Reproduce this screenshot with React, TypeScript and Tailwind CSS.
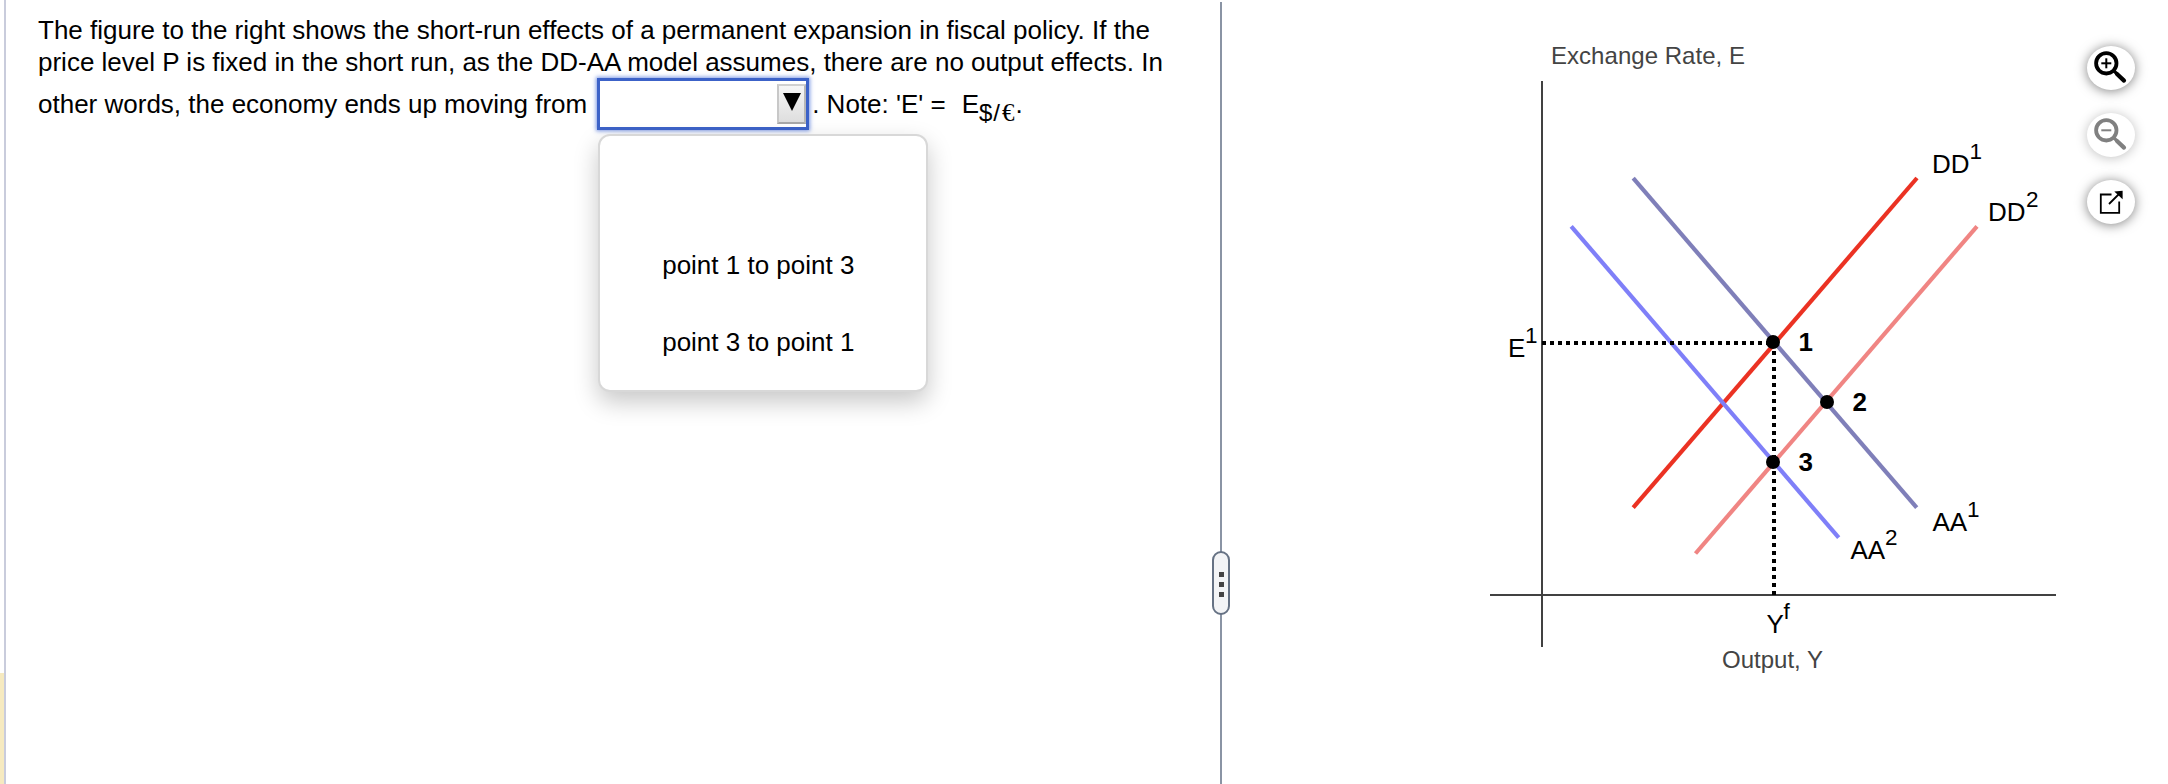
import React from 'react';

const options = ['', 'point 1 to point 3', 'point 3 to point 1'];

interface CurveProps {
  from: [number, number];
  to: [number, number];
  color: string;
}

const Curve = ({ from, to, color }: CurveProps) => (
  <line x1={from[0]} y1={from[1]} x2={to[0]} y2={to[1]} stroke={color} strokeWidth={4.2} />
);

interface LabelProps {
  x: number;
  y: number;
  text: string;
  sup: string;
  supX: number;
}

const Label = ({ x, y, text, sup, supX }: LabelProps) => (
  <>
    <text x={x} y={y} fontSize={26}>{text}</text>
    <text x={supX} y={y - 14} fontSize={22.5}>{sup}</text>
  </>
);

const Point = ({ x, y, label }: { x: number; y: number; label: string }) => (
  <>
    <circle cx={x} cy={y} r={7} />
    <text x={x + 25.5} y={y + 9} fontSize={26} fontWeight="bold">{label}</text>
  </>
);

const Chart = () => (
  <svg className="h-[784px] w-[620px] shrink-0" viewBox="1460 0 620 784">
    <g fill="#444444" fontSize={24}>
      <text x={1551} y={64} textLength={194}>Exchange Rate, E</text>
      <text x={1722} y={668} textLength={101}>Output, Y</text>
    </g>
    <g stroke="#414141" strokeWidth={2}>
      <line x1={1542} y1={81} x2={1542} y2={647} />
      <line x1={1490} y1={595} x2={2056} y2={595} />
    </g>

    <Curve from={[1633.2, 507.7]} to={[1917, 178]} color="#eb3223" />
    <Curve from={[1695.5, 553.5]} to={[1977, 226.3]} color="#f08583" />
    <Curve from={[1633.2, 178.1]} to={[1916.7, 507.7]} color="#7f7fb9" />
    <Curve from={[1571.2, 226.3]} to={[1838.7, 537.7]} color="#7f7ff8" />

    <g stroke="#000000" strokeWidth={4} strokeDasharray="4 4">
      <line x1={1542} y1={343} x2={1773} y2={343} />
      <line x1={1774} y1={343} x2={1774} y2={595} />
    </g>

    <Point x={1773} y={342} label="1" />
    <Point x={1827} y={402} label="2" />
    <Point x={1773} y={462} label="3" />

    <Label x={1508} y={357} text="E" sup="1" supX={1525} />
    <Label x={1932} y={172.7} text="DD" sup="1" supX={1969.5} />
    <Label x={1988} y={220.7} text="DD" sup="2" supX={2026} />
    <Label x={1932.5} y={530.7} text="AA" sup="1" supX={1967} />
    <Label x={1850.5} y={558.7} text="AA" sup="2" supX={1885} />
    <Label x={1766.5} y={632.7} text="Y" sup="f" supX={1783.5} />
  </svg>
);

const Magnifier = ({ plus }: { plus?: boolean }) => (
  <svg viewBox="0 0 48 44" className="h-11 w-12" fill="none" stroke="currentColor">
    <circle cx={19.3} cy={17.3} r={10.2} strokeWidth={3.8} />
    <path d="M26.5 24.5 31 28.8" strokeWidth={3.2} />
    <path d="M30 28 37 34.6" strokeWidth={4.2} strokeLinecap="round" />
    <path d="M14.3 17.3h10" strokeWidth={2} />
    {plus && <path d="M19.3 12.3v10" strokeWidth={2} />}
  </svg>
);

const PopOut = () => (
  <svg viewBox="0 0 48 44" className="h-11 w-12" fill="none" stroke="currentColor" strokeWidth={1.8}>
    <path d="M24.5 14.5H13.8v18.3h18.4V21.5" />
    <path d="M22 24 32 14" />
    <path d="M27.3 11.5 35.6 10.8v8.4z" fill="currentColor" stroke="none" />
  </svg>
);

const ToolButton = ({ children, muted }: { children: React.ReactNode; muted?: boolean }) => (
  <button
    className={
      muted
        ? 'h-11 w-12 rounded-[50%] bg-white text-[#808080] shadow-[0_1px_12px_rgba(0,0,0,0.25)]'
        : 'h-11 w-12 rounded-[50%] bg-white text-black shadow-[0_1px_12px_rgba(0,0,0,0.5)]'
    }
  >
    {children}
  </button>
);

const AnswerSelect = () => (
  <span className="relative ml-[10px] block h-[52px] w-[212px] shrink-0">
    <button className="flex h-full w-full items-center justify-end border-3 border-[#3c62c8] bg-white shadow-[0_0_4px_1px_rgba(90,125,220,0.8)]">
      <span className="flex h-10 w-[29px] items-start justify-center border-2 border-t-[#d0d0d0] border-r-[#b8b8b8] border-b-[#a8a8a8] border-l-[#c8c8c8] bg-linear-to-b from-[#f6f6f6] to-[#dedede] pt-[7px]">
        <svg viewBox="0 0 18 18" className="h-[18px] w-[18px] shrink-0">
          <path d="M0 0h18L9 18z" />
        </svg>
      </span>
    </button>
    <ul className="absolute top-14 left-[1px] z-10 h-[258px] w-[330px] rounded-xl border-2 border-[#d8d8d8] bg-white pt-[7px] shadow-[0_10px_24px_rgba(0,0,0,0.22)]">
      {options.map((option, i) => (
        <li key={i} className="flex h-[77px] items-center pt-[13px] pl-[62px] text-[26px] whitespace-nowrap">
          {option}
        </li>
      ))}
    </ul>
  </span>
);

export default function App() {
  return (
    <div className="flex h-[784px] w-[2168px] overflow-hidden bg-white font-['Liberation_Sans',Arial,sans-serif] text-black">
      <div className="flex w-1 flex-col justify-end">
        <div className="h-[111px] bg-[#f6eac0]" />
      </div>
      <div className="w-0.5 bg-[#c9ccdc]" />

      <section className="w-[1205px] shrink-0 pt-[14px] pl-8 text-[26px] leading-8 whitespace-nowrap">
        <p>The figure to the right shows the short-run effects of a permanent expansion in fiscal policy. If the</p>
        <p>price level P is fixed in the short run, as the DD-AA model assumes, there are no output effects. In</p>
        <div className="flex h-[52px] items-center">
          <span>other words, the economy ends up moving from</span>
          <AnswerSelect />
          <span className="ml-[3px]">. Note: 'E' =</span>
          <span className="ml-[16px]">E</span>
          <span className="relative top-[9px] text-[24px] tracking-[1px]">
            $/<span className="ml-px font-['Liberation_Serif',serif] text-[25px]">€</span>
          </span>
          <span>.</span>
        </div>
      </section>

      <div className="relative mt-0.5 flex w-5 shrink-0 items-start justify-center">
        <div className="h-full w-0.5 bg-[#8a94a4]" />
        <div className="absolute top-[549px] flex h-16 w-[18px] flex-col items-center justify-center gap-[5px] rounded-full border-2 border-[#667284] bg-[#f3f4f6] pt-0.5">
          <i className="h-[5px] w-[5px] bg-[#444]" />
          <i className="h-[5px] w-[5px] bg-[#444]" />
          <i className="h-[5px] w-[5px] bg-[#444]" />
        </div>
      </div>

      <section className="flex grow pl-[229px]">
        <Chart />
        <div className="flex flex-col gap-[23px] pt-[46px] pl-[7px]">
          <ToolButton>
            <Magnifier plus />
          </ToolButton>
          <ToolButton muted>
            <Magnifier />
          </ToolButton>
          <ToolButton>
            <PopOut />
          </ToolButton>
        </div>
      </section>
    </div>
  );
}
